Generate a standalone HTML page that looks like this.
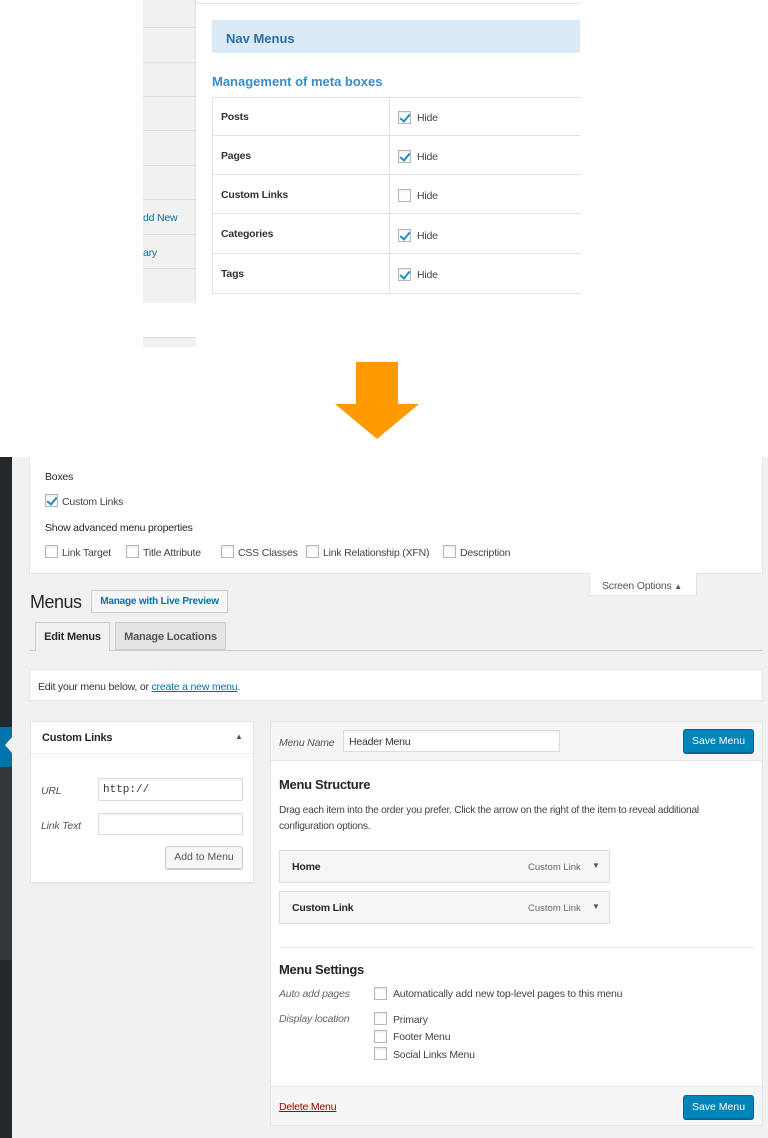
<!DOCTYPE html>
<html><head><meta charset="utf-8"><style>
*{box-sizing:border-box;margin:0;padding:0}
body{width:768px;height:1138px;position:relative;background:#fff;font-family:"Liberation Sans",sans-serif;overflow:hidden;color:#23282d}
.a{position:absolute}
.cb{position:absolute;width:13px;height:13px;border:1px solid #b4b9be;background:#fff;box-shadow:inset 0 1px 2px rgba(0,0,0,.1)}
.cb.on::after{content:"";position:absolute;left:3px;top:0px;width:4px;height:8px;border:solid #1e8cbe;border-width:0 2px 2px 0;transform:rotate(40deg)}
.t{font-size:10.5px;color:#444;letter-spacing:-0.2px}
.inp{position:absolute;background:#fff;border:1px solid #ddd;box-shadow:inset 0 1px 2px rgba(0,0,0,.07)}
.btn{position:absolute;background:#0085ba;border:1px solid #006799;border-radius:3px;color:#fff;font-size:10.5px;text-align:center;box-shadow:0 1px 0 #006799}
.row{position:absolute;left:212px;width:368px;height:39px;border-bottom:1px solid #e1e1e1}
</style></head><body>
<!-- top section -->
<div class="a" style="left:143px;top:0;width:53px;height:347px;background:#f1f1f1;border-right:1px solid #e1e1e1"></div>
<div class="a" style="left:143px;top:27px;width:53px;height:1px;background:#ddd"></div>
<div class="a" style="left:143px;top:62px;width:53px;height:1px;background:#ddd"></div>
<div class="a" style="left:143px;top:96px;width:53px;height:1px;background:#ddd"></div>
<div class="a" style="left:143px;top:130px;width:53px;height:1px;background:#ddd"></div>
<div class="a" style="left:143px;top:165px;width:53px;height:1px;background:#ddd"></div>
<div class="a" style="left:143px;top:199px;width:53px;height:1px;background:#ddd"></div>
<div class="a" style="left:143px;top:234px;width:53px;height:1px;background:#ddd"></div>
<div class="a" style="left:143px;top:268px;width:53px;height:1px;background:#ddd"></div>
<div class="a" style="left:143px;top:303px;width:53px;height:44px;background:#fff"></div>
<div class="a" style="left:143px;top:337px;width:53px;height:10px;background:#f1f1f1;border-top:1px solid #ddd"></div>
<div class="a t" style="left:143px;top:212px;color:#0073aa">dd New</div>
<div class="a t" style="left:143px;top:247px;color:#0073aa">ary</div>
<div class="a" style="left:196px;top:3px;width:384px;height:1px;background:#e5e5e5"></div>
<div class="a" style="left:212px;top:20px;width:368px;height:33px;background:#d9e9f6"></div>
<div class="a" style="left:226px;top:31px;font-size:13px;font-weight:bold;color:#2e6da4">Nav Menus</div>
<div class="a" style="left:212px;top:74px;font-size:13px;font-weight:bold;color:#3a8cc9">Management of meta boxes</div>
<div class="a" style="left:212px;top:97px;width:368px;height:197px;border:1px solid #e1e1e1;border-right:none"></div>
<div class="a" style="left:389px;top:97px;width:1px;height:197px;background:#e1e1e1"></div>
<div class="row" style="top:97px"></div><div class="row" style="top:136px"></div><div class="row" style="top:175px"></div><div class="row" style="top:215px"></div>
<div class="a t" style="left:221px;top:111px;font-weight:bold;color:#333">Posts</div>
<div class="a t" style="left:221px;top:150px;font-weight:bold;color:#333">Pages</div>
<div class="a t" style="left:221px;top:189px;font-weight:bold;color:#333">Custom Links</div>
<div class="a t" style="left:221px;top:228px;font-weight:bold;color:#333">Categories</div>
<div class="a t" style="left:221px;top:268px;font-weight:bold;color:#333">Tags</div>
<div class="cb on" style="left:398px;top:111px"></div><div class="a t" style="left:417px;top:112px">Hide</div>
<div class="cb on" style="left:398px;top:150px"></div><div class="a t" style="left:417px;top:151px">Hide</div>
<div class="cb" style="left:398px;top:189px"></div><div class="a t" style="left:417px;top:190px">Hide</div>
<div class="cb on" style="left:398px;top:229px"></div><div class="a t" style="left:417px;top:230px">Hide</div>
<div class="cb on" style="left:398px;top:268px"></div><div class="a t" style="left:417px;top:269px">Hide</div>
<!-- arrow -->
<svg class="a" style="left:335px;top:362px" width="84" height="77"><polygon points="21,0 63,0 63,42 84,42 42,77 0,42 21,42" fill="#fd9a00"/></svg>
<!-- bottom -->
<div class="a" style="left:0;top:457px;width:768px;height:681px;background:#f1f1f1"></div>
<div class="a" style="left:0;top:457px;width:12px;height:681px;background:#23282d"></div>
<div class="a" style="left:0;top:727px;width:12px;height:233px;background:#32373c"></div>
<div class="a" style="left:0;top:727px;width:12px;height:40px;background:#0073aa"></div>
<div class="a" style="left:5px;top:737px;width:0;height:0;border-top:8px solid transparent;border-bottom:8px solid transparent;border-right:7px solid #f1f1f1"></div>
<div class="a" style="left:29px;top:457px;width:734px;height:117px;background:#fff;border:1px solid #e5e5e5;border-top:none"></div>
<div class="a t" style="left:45px;top:471px;color:#23282d">Boxes</div>
<div class="cb on" style="left:45px;top:494px"></div><div class="a t" style="left:62px;top:496px">Custom Links</div>
<div class="a t" style="left:45px;top:522px;color:#23282d">Show advanced menu properties</div>
<div class="cb" style="left:45px;top:545px"></div><div class="a t" style="left:62px;top:547px">Link Target</div>
<div class="cb" style="left:126px;top:545px"></div><div class="a t" style="left:143px;top:547px">Title Attribute</div>
<div class="cb" style="left:221px;top:545px"></div><div class="a t" style="left:238px;top:547px">CSS Classes</div>
<div class="cb" style="left:306px;top:545px"></div><div class="a t" style="left:323px;top:547px">Link Relationship (XFN)</div>
<div class="cb" style="left:443px;top:545px"></div><div class="a t" style="left:460px;top:547px">Description</div>
<div class="a" style="left:589px;top:573px;width:108px;height:23px;background:#fff;border:1px solid #e5e5e5;border-top:none"></div>
<div class="a t" style="left:602px;top:580px;color:#555">Screen Options <span style="font-size:8px">▲</span></div>
<div class="a" style="left:30px;top:592px;font-size:18px;color:#23282d;letter-spacing:-0.5px">Menus</div>
<div class="a" style="left:91px;top:590px;width:137px;height:23px;border:1px solid #ccc;background:#f7f7f7;font-size:10px;color:#0073aa;text-align:center;line-height:22px;font-weight:bold;letter-spacing:-0.2px">Manage with Live Preview</div>
<div class="a" style="left:29px;top:650px;width:734px;height:1px;background:#ccc"></div>
<div class="a" style="left:35px;top:622px;width:75px;height:29px;background:#f1f1f1;border:1px solid #ccc;border-bottom:none;font-size:11px;font-weight:bold;text-align:center;line-height:29px;letter-spacing:-0.2px">Edit Menus</div>
<div class="a" style="left:115px;top:622px;width:111px;height:28px;background:#e4e4e4;border:1px solid #ccc;font-size:11px;font-weight:bold;color:#555;text-align:center;line-height:29px;letter-spacing:-0.2px">Manage Locations</div>
<div class="a" style="left:29px;top:669px;width:734px;height:32px;background:#fff;border:1px solid #e5e5e5"></div>
<div class="a t" style="left:38px;top:681px;color:#333">Edit your menu below, or <span style="color:#0073aa;text-decoration:underline">create a new menu</span>.</div>
<!-- left box -->
<div class="a" style="left:30px;top:721px;width:224px;height:162px;background:#fff;border:1px solid #e5e5e5;box-shadow:0 1px 1px rgba(0,0,0,.04)"></div>
<div class="a" style="left:31px;top:753px;width:222px;height:1px;background:#eee"></div>
<div class="a" style="left:42px;top:732px;font-size:11px;font-weight:bold;letter-spacing:-0.2px">Custom Links</div>
<div class="a" style="left:235px;top:732px;font-size:8px;color:#555">▲</div>
<div class="a t" style="left:41px;top:785px;font-style:italic;color:#555">URL</div>
<div class="inp" style="left:98px;top:778px;width:145px;height:23px"></div>
<div class="a" style="left:103px;top:784px;font-family:'Liberation Mono',monospace;font-size:11px;color:#333">http://</div>
<div class="a t" style="left:41px;top:820px;font-style:italic;color:#555">Link Text</div>
<div class="inp" style="left:98px;top:813px;width:145px;height:22px"></div>
<div class="a" style="left:165px;top:846px;width:78px;height:23px;border:1px solid #ccc;border-radius:3px;background:#f7f7f7;box-shadow:0 1px 0 #ccc;font-size:10.5px;color:#555;text-align:center;line-height:21px">Add to Menu</div>
<!-- right box -->
<div class="a" style="left:270px;top:721px;width:493px;height:405px;background:#fff;border:1px solid #e5e5e5"></div>
<div class="a" style="left:271px;top:722px;width:491px;height:39px;background:#f5f5f5;border-bottom:1px solid #e5e5e5"></div>
<div class="a t" style="left:279px;top:737px;font-style:italic;color:#555">Menu Name</div>
<div class="inp" style="left:343px;top:730px;width:217px;height:22px"></div>
<div class="a t" style="left:349px;top:736px;color:#333">Header Menu</div>
<div class="btn" style="left:683px;top:729px;width:71px;height:24px;line-height:23px">Save Menu</div>
<div class="a" style="left:279px;top:777px;font-size:13px;font-weight:bold;color:#23282d;letter-spacing:-0.3px">Menu Structure</div>
<div class="a t" style="left:279px;top:803px;line-height:16px;color:#444;white-space:nowrap;font-size:10.2px;letter-spacing:-0.25px">Drag each item into the order you prefer. Click the arrow on the right of the item to reveal additional<br>configuration options.</div>
<div class="a" style="left:279px;top:850px;width:331px;height:33px;background:#f6f6f6;border:1px solid #ddd"></div>
<div class="a t" style="left:292px;top:861px;font-weight:bold;color:#23282d">Home</div>
<div class="a" style="left:528px;top:862px;font-size:9.5px;color:#666">Custom Link</div>
<div class="a" style="left:592px;top:861px;font-size:8px;color:#555">▼</div>
<div class="a" style="left:279px;top:891px;width:331px;height:33px;background:#f6f6f6;border:1px solid #ddd"></div>
<div class="a t" style="left:292px;top:902px;font-weight:bold;color:#23282d">Custom Link</div>
<div class="a" style="left:528px;top:903px;font-size:9.5px;color:#666">Custom Link</div>
<div class="a" style="left:592px;top:902px;font-size:8px;color:#555">▼</div>
<div class="a" style="left:279px;top:947px;width:476px;height:1px;background:#eee"></div>
<div class="a" style="left:279px;top:962px;font-size:13px;font-weight:bold;color:#23282d;letter-spacing:-0.3px">Menu Settings</div>
<div class="a t" style="left:279px;top:988px;font-style:italic;color:#666">Auto add pages</div>
<div class="cb" style="left:374px;top:987px"></div><div class="a t" style="left:393px;top:988px">Automatically add new top-level pages to this menu</div>
<div class="a t" style="left:279px;top:1013px;font-style:italic;color:#666">Display location</div>
<div class="cb" style="left:374px;top:1012px"></div><div class="a t" style="left:393px;top:1014px">Primary</div>
<div class="cb" style="left:374px;top:1030px"></div><div class="a t" style="left:393px;top:1031px">Footer Menu</div>
<div class="cb" style="left:374px;top:1047px"></div><div class="a t" style="left:393px;top:1049px">Social Links Menu</div>
<div class="a" style="left:271px;top:1086px;width:491px;height:39px;background:#f5f5f5;border-top:1px solid #e5e5e5"></div>
<div class="a t" style="left:279px;top:1101px;color:#a00;text-decoration:underline">Delete Menu</div>
<div class="btn" style="left:683px;top:1095px;width:71px;height:24px;line-height:23px">Save Menu</div>
</body></html>
